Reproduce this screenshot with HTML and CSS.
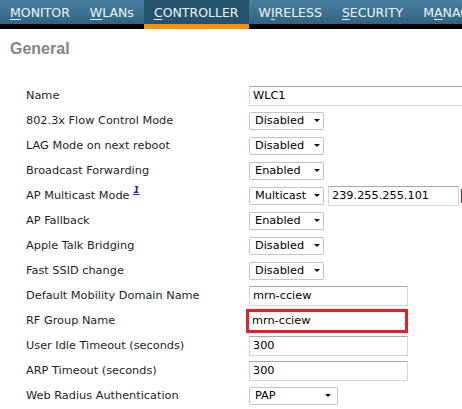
FILE: index.html
```html
<!DOCTYPE html>
<html>
<head>
<meta charset="utf-8">
<link rel="stylesheet" href="styles.css">
</head>
<body>
<nav class="topnav">
  <span class="tab"><u>M</u>ONITOR</span>
  <span class="tab"><u>W</u>LANs</span>
  <span class="tab active"><u>C</u>ONTROLLER</span>
  <span class="tab">W<u>I</u>RELESS</span>
  <span class="tab"><u>S</u>ECURITY</span>
  <span class="tab">M<u>A</u>NAGEMENT</span>
</nav>
<h2 class="title">General</h2>
<div class="form">
  <div class="label">Name</div>
  <div class="field"><input class="text wide" type="text" value="WLC1"></div>

  <div class="label">802.3x Flow Control Mode</div>
  <div class="field"><div class="select">Disabled<svg class="arrow" width="6" height="3" viewBox="0 0 6 3"><path d="M0 0H6L3 3Z"/></svg></div></div>

  <div class="label">LAG Mode on next reboot</div>
  <div class="field"><div class="select">Disabled<svg class="arrow" width="6" height="3" viewBox="0 0 6 3"><path d="M0 0H6L3 3Z"/></svg></div></div>

  <div class="label">Broadcast Forwarding</div>
  <div class="field"><div class="select">Enabled<svg class="arrow" width="6" height="3" viewBox="0 0 6 3"><path d="M0 0H6L3 3Z"/></svg></div></div>

  <div class="label">AP Multicast Mode <sup class="note"><a href="#">1</a></sup></div>
  <div class="field multi">
    <div class="select">Multicast<svg class="arrow" width="6" height="3" viewBox="0 0 6 3"><path d="M0 0H6L3 3Z"/></svg></div>
    <input class="text ip" type="text" value="239.255.255.101">
    <span class="edge"></span>
  </div>

  <div class="label">AP Fallback</div>
  <div class="field"><div class="select">Enabled<svg class="arrow" width="6" height="3" viewBox="0 0 6 3"><path d="M0 0H6L3 3Z"/></svg></div></div>

  <div class="label">Apple Talk Bridging</div>
  <div class="field"><div class="select">Disabled<svg class="arrow" width="6" height="3" viewBox="0 0 6 3"><path d="M0 0H6L3 3Z"/></svg></div></div>

  <div class="label">Fast SSID change</div>
  <div class="field"><div class="select">Disabled<svg class="arrow" width="6" height="3" viewBox="0 0 6 3"><path d="M0 0H6L3 3Z"/></svg></div></div>

  <div class="label">Default Mobility Domain Name</div>
  <div class="field"><input class="text mid" type="text" value="mrn-cciew"></div>

  <div class="label">RF Group Name</div>
  <div class="field"><input class="text mid highlight" type="text" value="mrn-cciew"></div>

  <div class="label">User Idle Timeout (seconds)</div>
  <div class="field"><input class="text mid" type="text" value="300"></div>

  <div class="label">ARP Timeout (seconds)</div>
  <div class="field"><input class="text mid" type="text" value="300"></div>

  <div class="label">Web Radius Authentication</div>
  <div class="field"><div class="select pap">PAP<svg class="arrow" width="6" height="3" viewBox="0 0 6 3"><path d="M0 0H6L3 3Z"/></svg></div></div>
</div>
</body>
</html>
```
FILE: styles.css
```css
html { overflow: hidden; }
body {
  margin: 0;
  background: #fff;
  font-family: "DejaVu Sans", Verdana, sans-serif;
}
.topnav {
  display: flex;
  height: 29px;
  background: linear-gradient(#4a7fa0, #2c5e7c);
  white-space: nowrap;
  box-sizing: border-box;
}
.tab {
  display: block;
  box-sizing: border-box;
  height: 29px;
  padding: 4px 10px 0;
  border-bottom: 5px solid #000;
  color: #eef3f6;
  font-size: 12.5px;
  line-height: 17px;
}
.tab u { text-decoration-thickness: 1px; text-underline-offset: 2px; }
.tab.active {
  background: #25536d;
  border-bottom-color: #ff9000;
}
.title {
  margin: 11px 0 0 10px;
  font-family: "Liberation Sans", Arial, sans-serif;
  font-size: 16px;
  line-height: 18px;
  font-weight: bold;
  color: #858585;
}
.form {
  display: grid;
  grid-template-columns: 223px auto;
  grid-auto-rows: 25px;
  align-items: center;
  padding-left: 26px;
  margin-top: 25px;
}
.label {
  font-size: 11.3px;
  color: #1e1e1e;
  white-space: nowrap;
}
.note {
  font-size: 9px;
  vertical-align: 6px;
  line-height: 0;
}
.note a {
  color: #1a1adc;
  font-weight: bold;
  font-style: italic;
}
.field {
  display: flex;
  align-items: center;
}
.multi { gap: 4px; }
.text {
  box-sizing: border-box;
  height: 20px;
  margin: 0;
  padding: 0 3px;
  border: 1px solid #d6d6d6;
  border-top-color: #a8a8a8;
  border-radius: 0;
  background: #fff;
  font-family: "DejaVu Sans", Verdana, sans-serif;
  font-size: 11.3px;
  color: #000;
  outline: none;
}
.wide { width: 240px; }
.mid { width: 159px; }
.ip { width: 131px; }
.highlight {
  width: 162px;
  height: 24px;
  margin-left: -3px;
  padding-left: 3px;
  border: 3px solid #e41f26;
}
.select {
  box-sizing: border-box;
  display: flex;
  align-items: center;
  justify-content: space-between;
  width: 75px;
  height: 18px;
  padding: 0 3px 0 5px;
  border: 1px solid #c4c4c4;
  border-radius: 2px;
  background: #fff;
  font-size: 11.3px;
  color: #000;
}
.select.pap { width: 89px; padding-right: 6px; }
.arrow { fill: #111; flex: none; }
.edge {
  width: 1px;
  height: 14px;
  margin-left: -2px;
  background: #6e3a2e;
  flex: none;
}
```
